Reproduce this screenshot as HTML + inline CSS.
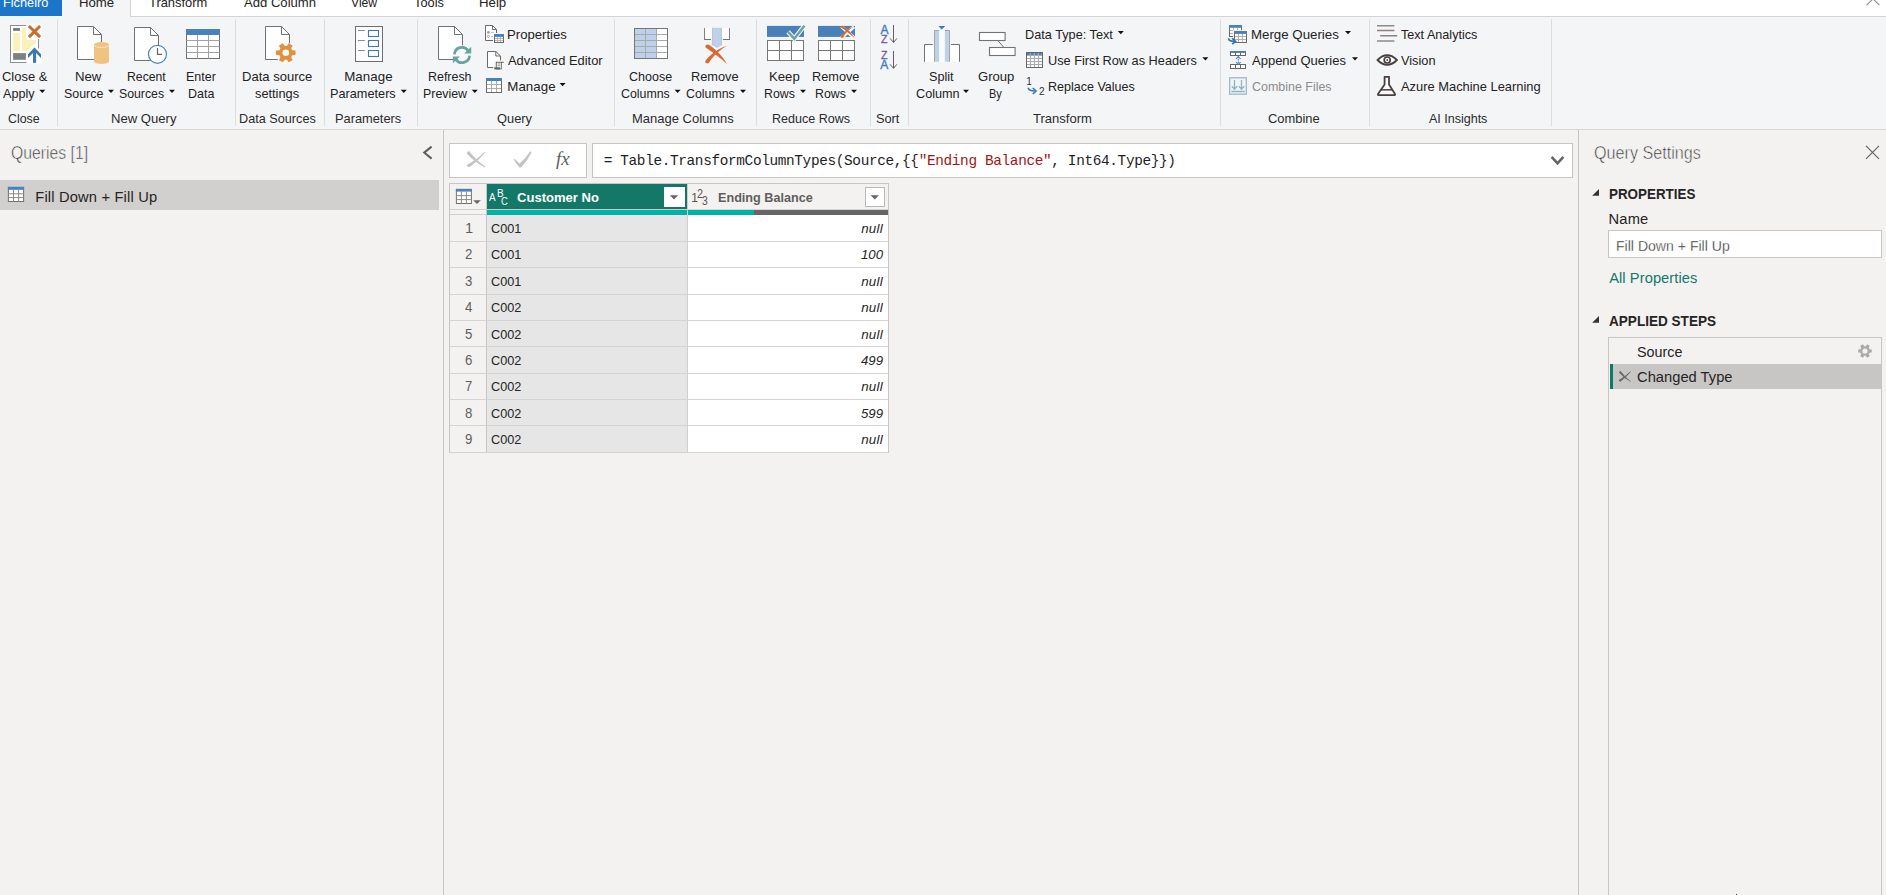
<!DOCTYPE html>
<html lang="en"><head><meta charset="utf-8"><title>Power Query Editor</title>
<style>
html,body{margin:0;padding:0}
body{width:1886px;height:895px;overflow:hidden;position:relative;background:#f3f2f1;font-family:"Liberation Sans", sans-serif;}
.t{position:absolute;white-space:pre;line-height:1;transform-origin:0 0}
.b{position:absolute;box-sizing:border-box}
svg{position:absolute;left:0;top:0}
</style></head><body>
<div class="b" style="left:0px;top:0px;width:1886px;height:16px;background:#ffffff;"></div>
<div class="b" style="left:0px;top:0px;width:62px;height:15.6px;background:#1b75c9;"></div>
<div class="b" style="left:62px;top:0px;width:69px;height:17px;background:#f4f5f7;border-right:1px solid #d4d5d7;"></div>
<div class="b" style="left:0px;top:16px;width:1886px;height:114px;background:#f4f5f7;border-bottom:1px solid #d6d7d9;"></div>
<div class="b" style="left:130px;top:16px;width:1756px;height:1px;background:#d4d5d7;"></div>
<div class="b" style="left:57px;top:19px;width:1px;height:107px;background:#dddee0;"></div>
<div class="b" style="left:235px;top:19px;width:1px;height:107px;background:#dddee0;"></div>
<div class="b" style="left:324px;top:19px;width:1px;height:107px;background:#dddee0;"></div>
<div class="b" style="left:417px;top:19px;width:1px;height:107px;background:#dddee0;"></div>
<div class="b" style="left:614px;top:19px;width:1px;height:107px;background:#dddee0;"></div>
<div class="b" style="left:756px;top:19px;width:1px;height:107px;background:#dddee0;"></div>
<div class="b" style="left:870px;top:19px;width:1px;height:107px;background:#dddee0;"></div>
<div class="b" style="left:908px;top:19px;width:1px;height:107px;background:#dddee0;"></div>
<div class="b" style="left:1220px;top:19px;width:1px;height:107px;background:#dddee0;"></div>
<div class="b" style="left:1369px;top:19px;width:1px;height:107px;background:#dddee0;"></div>
<div class="b" style="left:1551px;top:19px;width:1px;height:107px;background:#dddee0;"></div>
<div class="b" style="left:0px;top:180px;width:438.75px;height:29.75px;background:#d2d0ce;"></div>
<div class="b" style="left:443px;top:130px;width:1px;height:765px;background:#c8c6c4;"></div>
<div class="b" style="left:1578px;top:130px;width:1px;height:765px;background:#c8c6c4;"></div>
<div class="b" style="left:449px;top:143px;width:138px;height:35px;background:#ffffff;border:1px solid #c8c6c4;"></div>
<div class="b" style="left:592px;top:143px;width:981px;height:35px;background:#ffffff;border:1px solid #c8c6c4;"></div>
<div class="b" style="left:449px;top:183px;width:440px;height:270px;background:#ffffff;border:1px solid #c8c6c4;"></div>
<div class="b" style="left:450px;top:184px;width:36px;height:31px;background:#f3f2f1;"></div>
<div class="b" style="left:486px;top:184px;width:1px;height:268px;background:#c8c6c4;"></div>
<div class="b" style="left:487px;top:184px;width:200px;height:25px;background:#147868;"></div>
<div class="b" style="left:487px;top:209px;width:200px;height:1px;background:#cfc9c8;"></div>
<div class="b" style="left:487px;top:210px;width:200px;height:5px;background:#00b2a6;"></div>
<div class="b" style="left:687px;top:184px;width:1px;height:268px;background:#d2d0ce;"></div>
<div class="b" style="left:688px;top:184px;width:200px;height:25px;background:#f3f2f1;"></div>
<div class="b" style="left:688px;top:209px;width:200px;height:1px;background:#d8d6d4;"></div>
<div class="b" style="left:688px;top:210px;width:66px;height:5px;background:#00b2a6;"></div>
<div class="b" style="left:754px;top:210px;width:134px;height:5px;background:#666666;"></div>
<div class="b" style="left:450px;top:209px;width:36px;height:1px;background:#d2d0ce;"></div>
<div class="b" style="left:450px;top:214px;width:36px;height:1px;background:#d2d0ce;"></div>
<div class="b" style="left:664px;top:187px;width:20.5px;height:19.6px;background:#ffffff;"></div>
<div class="b" style="left:865px;top:187px;width:20px;height:19.6px;background:#ffffff;border:1px solid #b9b9b9;"></div>
<div class="b" style="left:450px;top:215px;width:36px;height:26px;background:#f3f2f1;"></div>
<div class="b" style="left:487px;top:215px;width:200px;height:26px;background:#e6e6e6;"></div>
<div class="b" style="left:450px;top:241px;width:438px;height:1px;background:#d4d4d4;"></div>
<div class="b" style="left:450px;top:242px;width:36px;height:25px;background:#f3f2f1;"></div>
<div class="b" style="left:487px;top:242px;width:200px;height:25px;background:#e6e6e6;"></div>
<div class="b" style="left:450px;top:267px;width:438px;height:1px;background:#d4d4d4;"></div>
<div class="b" style="left:450px;top:268px;width:36px;height:26px;background:#f3f2f1;"></div>
<div class="b" style="left:487px;top:268px;width:200px;height:26px;background:#e6e6e6;"></div>
<div class="b" style="left:450px;top:294px;width:438px;height:1px;background:#d4d4d4;"></div>
<div class="b" style="left:450px;top:295px;width:36px;height:25px;background:#f3f2f1;"></div>
<div class="b" style="left:487px;top:295px;width:200px;height:25px;background:#e6e6e6;"></div>
<div class="b" style="left:450px;top:320px;width:438px;height:1px;background:#d4d4d4;"></div>
<div class="b" style="left:450px;top:321px;width:36px;height:25px;background:#f3f2f1;"></div>
<div class="b" style="left:487px;top:321px;width:200px;height:25px;background:#e6e6e6;"></div>
<div class="b" style="left:450px;top:346px;width:438px;height:1px;background:#d4d4d4;"></div>
<div class="b" style="left:450px;top:347px;width:36px;height:26px;background:#f3f2f1;"></div>
<div class="b" style="left:487px;top:347px;width:200px;height:26px;background:#e6e6e6;"></div>
<div class="b" style="left:450px;top:373px;width:438px;height:1px;background:#d4d4d4;"></div>
<div class="b" style="left:450px;top:374px;width:36px;height:25px;background:#f3f2f1;"></div>
<div class="b" style="left:487px;top:374px;width:200px;height:25px;background:#e6e6e6;"></div>
<div class="b" style="left:450px;top:399px;width:438px;height:1px;background:#d4d4d4;"></div>
<div class="b" style="left:450px;top:400px;width:36px;height:25px;background:#f3f2f1;"></div>
<div class="b" style="left:487px;top:400px;width:200px;height:25px;background:#e6e6e6;"></div>
<div class="b" style="left:450px;top:425px;width:438px;height:1px;background:#d4d4d4;"></div>
<div class="b" style="left:450px;top:426px;width:36px;height:26px;background:#f3f2f1;"></div>
<div class="b" style="left:487px;top:426px;width:200px;height:26px;background:#e6e6e6;"></div>
<div class="b" style="left:450px;top:452px;width:438px;height:1px;background:#d4d4d4;"></div>
<div class="b" style="left:1608px;top:230px;width:274px;height:28px;background:#ffffff;border:1px solid #c8c6c4;"></div>
<div class="b" style="left:1608px;top:337px;width:274px;height:600px;border:1px solid #c8c6c4;"></div>
<div class="b" style="left:1610px;top:364px;width:271px;height:24.75px;background:#c8c6c4;"></div>
<div class="b" style="left:1610px;top:364px;width:3px;height:24.75px;background:#0e7a68;"></div>
<svg width="1886" height="895" viewBox="0 0 1886 895" font-family="Liberation Sans, sans-serif">
<path d="M1866.6 5.2L1873 -1.2L1879.4 5.2" fill="none" stroke="#8a8a8a" stroke-width="1.1"/>
<rect x="10.5" y="25.5" width="28" height="37" fill="#ffffff" stroke="#8a8f8d"/>
<rect x="13.1" y="28" width="6.8" height="2.9" fill="#7b7b7b"/>
<rect x="13.1" y="33" width="6.8" height="17.9" fill="#faf2b8"/>
<path d="M22 28H26V38.6L27.6 40.1H36.2V42.6L26.6 50.9H22Z" fill="#faf2b8"/>
<rect x="13.1" y="53.1" width="12.8" height="6.7" fill="#808080"/>
<path d="M26.2 23.8H42V38.9H27.6L26.2 37.6Z" fill="#ffffff"/>
<path d="M26.4 63.6V51.6L34.5 45L42 51.4V63.6Z" fill="#ffffff"/>
<path d="M28.9 26L40.1 37.1M40.1 26L28.9 37.1" stroke="#cd6b2a" stroke-width="3" fill="none"/>
<path d="M34.55 62.9V50" stroke="#3a78b4" stroke-width="3.1" fill="none"/>
<path d="M28 54.3L34.55 47.4L41 54.3V58L34.55 51.6L28 58Z" fill="#3a78b4"/>
<path d="M77.5 26.5H93.5L101.5 34.5V59.5H77.5Z" fill="#fff" stroke="#717171" stroke-width="1"/><path d="M93.5 26.5V34.5H101.5" fill="none" stroke="#717171" stroke-width="1"/>
<path d="M94 44.6v16.6a7.5 2.8 0 0 0 15 0V44.6a7.5 2.6 0 0 0 -15 0z" fill="#f0c480"/>
<path d="M94 44.9a7.5 2.6 0 0 0 15 0" fill="none" stroke="#fbe9cc" stroke-width="0.9"/>
<path d="M134.5 27.5H150.5L158.5 35.5V60.5H134.5Z" fill="#fff" stroke="#717171" stroke-width="1"/><path d="M150.5 27.5V35.5H158.5" fill="none" stroke="#717171" stroke-width="1"/>
<circle cx="157.45" cy="54.3" r="9" fill="#fff" stroke="#4a84c0" stroke-width="1.2"/>
<path d="M157.5 47.9V54.4H162.1" fill="none" stroke="#666" stroke-width="1.2"/>
<rect x="186.5" y="29.5" width="33.0" height="29.0" fill="#fff" stroke="#707070" stroke-width="1"/><rect x="186.0" y="29.0" width="34.0" height="6.0" fill="#4a80bc"/><path d="M197.5 35V58.5M208.5 35V58.5M186.5 40.5H219.5M186.5 46.5H219.5M186.5 52.5H219.5" fill="none" stroke="#a2a2a2" stroke-width="1"/>
<path d="M265.5 26.5H281.5L289.5 34.5V59.5H265.5Z" fill="#fff" stroke="#717171" stroke-width="1"/><path d="M281.5 26.5V34.5H289.5" fill="none" stroke="#717171" stroke-width="1"/>
<circle cx="285.8" cy="52.8" r="10.4" fill="#f8f8fa"/>
<path d="M292.22 50.26L295.55 50.57L295.55 55.03L292.22 55.34L291.21 57.09L292.61 60.13L288.74 62.36L286.81 59.63L284.79 59.63L282.86 62.36L278.99 60.13L280.39 57.09L279.38 55.34L276.05 55.03L276.05 50.57L279.38 50.26L280.39 48.51L278.99 45.47L282.86 43.24L284.79 45.97L286.81 45.97L288.74 43.24L292.61 45.47L291.21 48.51ZM289.1 52.8a3.3 3.3 0 1 0 -6.6 0a3.3 3.3 0 1 0 6.6 0Z" fill="#de9240" fill-rule="evenodd"/>
<rect x="355.5" y="26.5" width="27" height="35" fill="#fdfdfd" stroke="#6e6e6e"/>
<path d="M358 30.5H364.8M358 40.5H364.8M358 50.5H364.8" stroke="#8a8a8a" stroke-width="1"/>
<rect x="368.5" y="30.5" width="10" height="6" fill="#fff" stroke="#3f78b8" stroke-width="1.1"/>
<rect x="368.5" y="40.5" width="10" height="6" fill="#fff" stroke="#3f78b8" stroke-width="1.1"/>
<rect x="368.5" y="50.5" width="10" height="6" fill="#fff" stroke="#3f78b8" stroke-width="1.1"/>
<path d="M438.5 26.5H454.5L462.5 34.5V59.5H438.5Z" fill="#fff" stroke="#717171" stroke-width="1"/><path d="M454.5 26.5V34.5H462.5" fill="none" stroke="#717171" stroke-width="1"/>
<circle cx="462" cy="55" r="9.8" fill="#f8f8fa"/>
<path d="M454.4 54.4A7.6 7.6 0 0 1 468.2 50.6" fill="none" stroke="#69a3a1" stroke-width="2.7"/>
<path d="M471.2 46.8V53.6H464.2Z" fill="#69a3a1"/>
<path d="M469.6 55.6A7.6 7.6 0 0 1 455.8 59.4" fill="none" stroke="#69a3a1" stroke-width="2.7"/>
<path d="M452.9 63.3V56.4H459.9Z" fill="#69a3a1"/>
<path d="M485.5 25.5H492.5L496.5 29.5V40.5H485.5Z" fill="#fff" stroke="#696969" stroke-width="1"/>
<path d="M492.5 25.5V29.5H496.5" fill="none" stroke="#696969" stroke-width="1"/>
<circle cx="488.4" cy="32.4" r="1.35" fill="#9a9e9a"/><circle cx="488.4" cy="36.4" r="1.1" fill="none" stroke="#9a9e9a" stroke-width="0.8"/>
<path d="M491 32.4H493.8M491 36.4H492.8" stroke="#bcbcbc" stroke-width="1"/>
<rect x="493" y="33" width="12" height="11" fill="#f8f9fb"/>
<rect x="494.5" y="34.5" width="9.0" height="8.0" fill="#acacac" stroke="#6a6a6a" stroke-width="1"/><rect x="494.0" y="34.0" width="10.0" height="2.799999999999997" fill="#4a80bc"/><rect x="495.00" y="36.96" width="2.13" height="1.15" fill="#fff"/><rect x="497.93" y="36.96" width="2.13" height="1.15" fill="#fff"/><rect x="500.87" y="36.96" width="2.13" height="1.15" fill="#fff"/><rect x="495.00" y="38.91" width="2.13" height="1.15" fill="#fff"/><rect x="497.93" y="38.91" width="2.13" height="1.15" fill="#fff"/><rect x="500.87" y="38.91" width="2.13" height="1.15" fill="#fff"/><rect x="495.00" y="40.85" width="2.13" height="1.15" fill="#fff"/><rect x="497.93" y="40.85" width="2.13" height="1.15" fill="#fff"/><rect x="500.87" y="40.85" width="2.13" height="1.15" fill="#fff"/>
<path d="M487.5 51.5H495.8L500.5 56V67.5H487.5Z" fill="#fff" stroke="#696969" stroke-width="1"/>
<path d="M495.8 51.5V56H500.5" fill="none" stroke="#696969" stroke-width="1"/>
<rect x="493.2" y="60.4" width="11.2" height="9.8" fill="#f8f9fb"/>
<rect x="496.3" y="62.3" width="5" height="6.6" fill="#fff" stroke="#696969" stroke-width="1"/>
<path d="M501 62.3H503.9" stroke="#696969" stroke-width="1"/>
<path d="M497.5 64H500.1M497.5 65.8H500.1" stroke="#8a8a8a" stroke-width="0.9"/>
<rect x="494.2" y="67.3" width="5.8" height="2.1" fill="#666"/>
<rect x="486.5" y="78.5" width="15.0" height="14.0" fill="#fff" stroke="#6a6a6a" stroke-width="1"/><rect x="486.0" y="78.0" width="16.0" height="2.9000000000000057" fill="#4a80bc"/><path d="M491.5 80.9V92.5M496.5 80.9V92.5M486.5 84.5H501.5M486.5 88.5H501.5" fill="none" stroke="#adadad" stroke-width="1"/>
<rect x="486.5" y="78.5" width="15" height="14" fill="none" stroke="#6a6a6a"/>
<rect x="486" y="78" width="16" height="2.9" fill="#4a80bc"/>
<rect x="634.5" y="28.5" width="33" height="30" fill="#fff"/>
<rect x="634.5" y="28.5" width="22" height="30" fill="#bdd2ea"/>
<path d="M645.5 28.5V58.5M656.5 28.5V58.5M634.5 34.5H667.5M634.5 40.5H667.5M634.5 46.5H667.5M634.5 52.5H667.5" fill="none" stroke="#a9a9a9" stroke-width="1"/>
<rect x="634.5" y="28.5" width="33" height="30" fill="none" stroke="#757575" stroke-width="1"/>
<rect x="704.5" y="28" width="25" height="11.5" fill="#fff"/>
<path d="M704.5 28V39.5M729.5 28V39.5" fill="none" stroke="#8f7a84" stroke-width="1"/>
<path d="M704 39.5H711M723 39.5H730" fill="none" stroke="#727272" stroke-width="1"/>
<path d="M712.2 27.8H721.6V45.3L717 47.9L712.2 45.3Z" fill="#bdd2ea"/>
<path d="M712.4 28V45.2M721.4 28V45.2" stroke="#b4b8bd" stroke-width="0.7"/>
<path d="M705.6 47.4Q704.8 44.2 708 44.4C713 46.4 722 55 727 64C720 57.6 712 51.4 705.6 47.4Z" fill="#d66c34"/>
<path d="M727 45.8C720.6 49.4 712 57 708.8 63Q706 64.4 705 61.8C708 56 718 48.6 727 45.8Z" fill="#d66c34"/>
<rect x="767" y="25.9" width="37" height="11" fill="#4a80ba"/>
<rect x="767.5" y="40.5" width="36.0" height="20.0" fill="#fff" stroke="#767676" stroke-width="1"/><path d="M779.5 40.5V60.5M791.5 40.5V60.5M767.5 50.5H803.5" fill="none" stroke="#767676" stroke-width="1"/>
<path d="M788.1 31.9L794.3 38.7L804.4 25.7" fill="none" stroke="#f6f7f9" stroke-width="4.6"/>
<path d="M788.1 31.9L794.3 38.7L804.4 25.7" fill="none" stroke="#6ea5a0" stroke-width="2.6"/>
<rect x="818" y="25.9" width="37" height="11" fill="#4a80ba"/>
<rect x="818.5" y="40.5" width="36.0" height="20.0" fill="#fff" stroke="#767676" stroke-width="1"/><path d="M830.5 40.5V60.5M842.5 40.5V60.5M818.5 50.5H854.5" fill="none" stroke="#767676" stroke-width="1"/>
<path d="M841.4 26.4L854.6 38.2M854 26.8L841.4 37.8" fill="none" stroke="#f6f7f9" stroke-width="3.4"/>
<path d="M840.8 27.6Q840.6 25.4 842.8 25.8C846.5 28 852 33.4 854.9 38.6C850.6 34.4 845.4 30.2 840.8 27.6Z" fill="#d66c34"/>
<path d="M854.3 26.6C850 28.8 845.2 33.4 843.2 37.6Q841.4 38.8 840.6 36.8C842.6 33.2 848.8 28.2 854.3 26.6Z" fill="#d66c34"/>
<text x="880.6" y="33.6" font-size="12" fill="#3c7cc0" stroke="#3c7cc0" stroke-width="0.35">A</text>
<text x="880.9" y="42.8" font-size="10.6" fill="#6e5a96" stroke="#6e5a96" stroke-width="0.3">Z</text>
<path d="M893.5 25V42.3M890.1 38.4L893.5 42.5L896.9 38.4" fill="none" stroke="#6b5b66" stroke-width="1"/>
<text x="880.9" y="58.7" font-size="10.6" fill="#6e5a96" stroke="#6e5a96" stroke-width="0.3">Z</text>
<text x="880.3" y="68.7" font-size="12" fill="#3c7cc0" stroke="#3c7cc0" stroke-width="0.35">A</text>
<path d="M893.5 51V68.2M890.1 64.3L893.5 68.4L896.9 64.3" fill="none" stroke="#6b5b66" stroke-width="1"/>
<rect x="924.5" y="44.5" width="35" height="17.3" fill="#fff"/>
<path d="M924.5 61.8V44.5H932.8M951 44.5H959.5V61.8" fill="none" stroke="#727272" stroke-width="1"/>
<rect x="934" y="30" width="16" height="31.8" fill="#f9fafb"/>
<rect x="934" y="30" width="5.1" height="31.8" fill="#bdd2ea"/><rect x="944.9" y="30" width="5.1" height="31.8" fill="#bdd2ea"/>
<path d="M934.5 61.8V30.5H939.1M944.9 30.5H949.5V61.8" fill="none" stroke="#a6a6a6" stroke-width="1"/>
<path d="M938.3 26H945.3L941.8 29.6Z" fill="#3f7abf"/>
<rect x="979.5" y="32.5" width="25.6" height="8" fill="#fff" stroke="#727272" stroke-width="1.1"/>
<rect x="989.5" y="47.5" width="25.6" height="8" fill="#fff" stroke="#727272" stroke-width="1.1"/>
<path d="M997.8 40.5L1004 47.5" stroke="#727272" stroke-width="1"/>
<rect x="1026.5" y="52.5" width="16.0" height="15.0" fill="#ababab" stroke="#666" stroke-width="1"/><rect x="1027.00" y="53.00" width="2.92" height="1.92" fill="#fff"/><rect x="1031.03" y="53.00" width="2.92" height="1.92" fill="#fff"/><rect x="1035.05" y="53.00" width="2.92" height="1.92" fill="#fff"/><rect x="1039.08" y="53.00" width="2.92" height="1.92" fill="#fff"/><rect x="1027.00" y="56.02" width="2.92" height="1.92" fill="#fff"/><rect x="1031.03" y="56.02" width="2.92" height="1.92" fill="#fff"/><rect x="1035.05" y="56.02" width="2.92" height="1.92" fill="#fff"/><rect x="1039.08" y="56.02" width="2.92" height="1.92" fill="#fff"/><rect x="1027.00" y="59.04" width="2.92" height="1.92" fill="#fff"/><rect x="1031.03" y="59.04" width="2.92" height="1.92" fill="#fff"/><rect x="1035.05" y="59.04" width="2.92" height="1.92" fill="#fff"/><rect x="1039.08" y="59.04" width="2.92" height="1.92" fill="#fff"/><rect x="1027.00" y="62.06" width="2.92" height="1.92" fill="#fff"/><rect x="1031.03" y="62.06" width="2.92" height="1.92" fill="#fff"/><rect x="1035.05" y="62.06" width="2.92" height="1.92" fill="#fff"/><rect x="1039.08" y="62.06" width="2.92" height="1.92" fill="#fff"/><rect x="1027.00" y="65.08" width="2.92" height="1.92" fill="#fff"/><rect x="1031.03" y="65.08" width="2.92" height="1.92" fill="#fff"/><rect x="1035.05" y="65.08" width="2.92" height="1.92" fill="#fff"/><rect x="1039.08" y="65.08" width="2.92" height="1.92" fill="#fff"/>
<rect x="1027.00" y="53" width="2.9" height="1.95" fill="#3f80c8"/>
<rect x="1030.97" y="53" width="2.9" height="1.95" fill="#3f80c8"/>
<rect x="1034.95" y="53" width="2.9" height="1.95" fill="#3f80c8"/>
<rect x="1038.92" y="53" width="2.9" height="1.95" fill="#3f80c8"/>
<path d="M1028.2 87.8C1028.4 90.4 1030.4 91 1034.8 91" fill="none" stroke="#3a7ab8" stroke-width="1.7"/>
<path d="M1032.8 88L1036 91L1032.8 94" fill="none" stroke="#3a7ab8" stroke-width="1.7"/>
<rect x="1229.5" y="25.5" width="12.0" height="11.0" fill="#acacac" stroke="#6a6a6a" stroke-width="1"/><rect x="1229.0" y="25.0" width="13.0" height="2.6999999999999993" fill="#4a80bc"/><rect x="1230.00" y="27.88" width="3.07" height="2.11" fill="#fff"/><rect x="1233.97" y="27.88" width="3.07" height="2.11" fill="#fff"/><rect x="1237.93" y="27.88" width="3.07" height="2.11" fill="#fff"/><rect x="1230.00" y="30.89" width="3.07" height="2.11" fill="#fff"/><rect x="1233.97" y="30.89" width="3.07" height="2.11" fill="#fff"/><rect x="1237.93" y="30.89" width="3.07" height="2.11" fill="#fff"/><rect x="1230.00" y="33.89" width="3.07" height="2.11" fill="#fff"/><rect x="1233.97" y="33.89" width="3.07" height="2.11" fill="#fff"/><rect x="1237.93" y="33.89" width="3.07" height="2.11" fill="#fff"/>
<rect x="1233" y="30.2" width="15" height="13.8" fill="#f8f9fb"/>
<rect x="1234.5" y="31.5" width="12.0" height="11.0" fill="#acacac" stroke="#6a6a6a" stroke-width="1"/><rect x="1234.0" y="31.0" width="13.0" height="2.799999999999997" fill="#4a80bc"/><rect x="1235.00" y="33.98" width="3.07" height="2.07" fill="#fff"/><rect x="1238.97" y="33.98" width="3.07" height="2.07" fill="#fff"/><rect x="1242.93" y="33.98" width="3.07" height="2.07" fill="#fff"/><rect x="1235.00" y="36.95" width="3.07" height="2.07" fill="#fff"/><rect x="1238.97" y="36.95" width="3.07" height="2.07" fill="#fff"/><rect x="1242.93" y="36.95" width="3.07" height="2.07" fill="#fff"/><rect x="1235.00" y="39.93" width="3.07" height="2.07" fill="#fff"/><rect x="1238.97" y="39.93" width="3.07" height="2.07" fill="#fff"/><rect x="1242.93" y="39.93" width="3.07" height="2.07" fill="#fff"/>
<path d="M1228.5 38.4C1228.7 40.8 1230.4 41.4 1234.4 41.4" fill="none" stroke="#2f74b8" stroke-width="1.7"/>
<path d="M1232.2 38.4L1235.6 41.4L1232.2 44.2" fill="none" stroke="#2f74b8" stroke-width="1.7"/>
<rect x="1230.5" y="51.5" width="15.0" height="4.0" fill="#666" stroke="#666" stroke-width="1"/><rect x="1230.0" y="51.0" width="16.0" height="1.7000000000000028" fill="#4a80bc"/><rect x="1231.00" y="52.90" width="4.00" height="2.10" fill="#fff"/><rect x="1236.00" y="52.90" width="4.00" height="2.10" fill="#fff"/><rect x="1241.00" y="52.90" width="4.00" height="2.10" fill="#fff"/>
<rect x="1230.5" y="64.5" width="15.0" height="4.0" fill="#666" stroke="#666" stroke-width="1"/><rect x="1231.00" y="65.00" width="4.00" height="3.00" fill="#fff"/><rect x="1236.00" y="65.00" width="4.00" height="3.00" fill="#fff"/><rect x="1241.00" y="65.00" width="4.00" height="3.00" fill="#fff"/>
<path d="M1238.3 56.6V64.4" fill="none" stroke="#3f86b8" stroke-width="1.1" stroke-dasharray="1.6 0.8"/>
<path d="M1236 59L1238.3 56.5L1240.6 59M1236 62L1238.3 64.5L1240.6 62" fill="none" stroke="#3f86b8" stroke-width="1.1"/>
<rect x="1229.7" y="77.8" width="16.6" height="16.4" fill="#f1f5f8" stroke="#94b4c4" stroke-width="1.2"/>
<path d="M1234.5 80V89M1231.8 86.2L1234.5 89.3L1237.2 86.2M1241.5 80V89M1238.8 86.2L1241.5 89.3L1244.2 86.2M1231.4 91.5H1244.8" fill="none" stroke="#90b5c1" stroke-width="1.3"/>
<path d="M1377 25.7H1394.4M1377 40.9H1394.4" stroke="#8a8a8a" stroke-width="1.5"/>
<path d="M1377 30.6H1394.4M1380.2 35.8H1397.2" stroke="#8f7f80" stroke-width="1.5"/>
<path d="M1377.6 60C1381 56.2 1384 55.2 1387.2 55.2C1390.4 55.2 1393.4 56.2 1396.8 60C1393.4 63.8 1390.4 64.8 1387.2 64.8C1384 64.8 1381 63.8 1377.6 60Z" fill="#fdfdfd" stroke="#48413f" stroke-width="1.9"/>
<circle cx="1387.2" cy="60" r="3" fill="#fff" stroke="#48413f" stroke-width="1.7"/><circle cx="1387.2" cy="60" r="0.9" fill="#48413f"/>
<path d="M1383.8 76.9H1389.8M1384.6 76.9V84.6L1378 94Q1377.6 95.2 1379 95.2H1394Q1395.4 95.2 1395 94L1389 84.6V76.9" fill="#fbfbfc" stroke="#48413f" stroke-width="1.8" stroke-linejoin="round"/>
<path d="M1380.6 89.8H1392.8" stroke="#48413f" stroke-width="1.5"/>
<path d="M39.3 89.8h6l-3.0 3.2z" fill="#111"/>
<path d="M108 89.8h6l-3.0 3.2z" fill="#111"/>
<path d="M169 89.8h6l-3.0 3.2z" fill="#111"/>
<path d="M400.8 89.8h6l-3.0 3.2z" fill="#111"/>
<path d="M471.8 89.8h6l-3.0 3.2z" fill="#111"/>
<path d="M674.6 89.8h6l-3.0 3.2z" fill="#111"/>
<path d="M740 89.8h6l-3.0 3.2z" fill="#111"/>
<path d="M800 89.8h6l-3.0 3.2z" fill="#111"/>
<path d="M851 89.8h6l-3.0 3.2z" fill="#111"/>
<path d="M963 89.8h6l-3.0 3.2z" fill="#111"/>
<path d="M559.6 83h6l-3.0 3.2z" fill="#111"/>
<path d="M1117.8 31h6l-3.0 3.2z" fill="#111"/>
<path d="M1202.4 57.2h6l-3.0 3.2z" fill="#111"/>
<path d="M1345 31h6l-3.0 3.2z" fill="#111"/>
<path d="M1352 57.2h6l-3.0 3.2z" fill="#111"/>
<path d="M431.6 146.6L424.2 152.6L431.6 158.6" fill="none" stroke="#605e5c" stroke-width="2"/>
<rect x="8.4" y="187.4" width="15.200000000000001" height="14.099999999999994" fill="#fff" stroke="#707070" stroke-width="1"/><rect x="7.9" y="186.9" width="16.200000000000003" height="2.9000000000000057" fill="#4a80bc"/><path d="M13.5 189.8V201.5M18.6 189.8V201.5M8.4 193.8H23.6M8.4 197.6H23.6" fill="none" stroke="#8a8a8a" stroke-width="1"/>
<path d="M466.89 153.69Q474.72 161.98 484.91 167.54L485.49 166.86Q476.13 160.35 469.11 151.11Q466.84 151.40 466.89 153.69Z" fill="#c4c4c4"/>
<path d="M469.08 167.31Q478.33 161.22 485.29 152.35L484.71 151.65Q476.96 159.56 466.92 164.69Q466.82 166.97 469.08 167.31Z" fill="#c4c4c4"/>
<path d="M521.90 166.57Q527.75 160.20 531.71 152.35L530.29 151.25Q525.54 158.48 518.90 164.23Q519.35 166.75 521.90 166.57Z" fill="#c4c4c4"/>
<path d="M522.25 165.45Q517.86 162.66 514.64 158.79L513.76 159.61Q516.16 164.22 519.75 167.75Q522.04 167.73 522.25 165.45Z" fill="#c4c4c4"/>
<path d="M1551.6 156.8L1557.5 163.3L1563.4 156.8" fill="none" stroke="#666" stroke-width="2.6"/>
<rect x="456.4" y="189.4" width="15.0" height="14.099999999999994" fill="#fff" stroke="#707070" stroke-width="1"/><rect x="455.9" y="188.9" width="16.0" height="2.6999999999999886" fill="#4a80bc"/><path d="M461.4 191.6V203.5M466.4 191.6V203.5M456.4 195.6H471.4M456.4 199.6H471.4" fill="none" stroke="#8a8a8a" stroke-width="1"/>
<path d="M473.2 200.2h7.6l-3.8 3.8z" fill="#666"/>
<path d="M669.8 195.2h8.4l-4.2 4.4z" fill="#666"/>
<path d="M870.6 195.2h8.4l-4.2 4.4z" fill="#666"/>
<path d="M1866 145.8L1879 158.8M1879 145.8L1866 158.8" stroke="#605e5c" stroke-width="1.1"/>
<path d="M1599 189V195.8H1592.2Z" fill="#333"/>
<path d="M1599 316V322.8H1592.2Z" fill="#333"/>
<path d="M1619.04 372.66Q1624.02 378.14 1630.60 381.82L1631.00 381.38Q1624.98 377.05 1620.56 370.94Q1619.03 371.11 1619.04 372.66Z" fill="#6a6a6a"/>
<path d="M1620.34 381.68Q1626.33 377.68 1630.79 371.83L1630.41 371.37Q1625.40 376.56 1618.86 379.92Q1618.81 381.46 1620.34 381.68Z" fill="#6a6a6a"/>
<path d="M1869.56 349.20L1871.82 349.44L1871.82 352.56L1869.56 352.80L1868.84 354.04L1869.77 356.13L1867.06 357.69L1865.72 355.85L1864.28 355.85L1862.94 357.69L1860.23 356.13L1861.16 354.04L1860.44 352.80L1858.18 352.56L1858.18 349.44L1860.44 349.20L1861.16 347.96L1860.23 345.87L1862.94 344.31L1864.28 346.15L1865.72 346.15L1867.06 344.31L1869.77 345.87L1868.84 347.96ZM1867.6 351a2.6 2.6 0 1 0 -5.2 0a2.6 2.6 0 1 0 5.2 0Z" fill="#ababab" fill-rule="evenodd"/>
<circle cx="1736.6" cy="895.2" r="2" fill="#fff"/><path d="M1735.9 895L1736.6 893.7L1737.3 895Z" fill="#111"/>
</svg>
<span class="t" style='left:3.44px;top:-4.46px;font-size:13.3px;transform:scaleX(0.9587);color:#ffffff;'>Ficheiro</span>
<span class="t" style='left:78.61px;top:-4.46px;font-size:13.3px;transform:scaleX(0.9920);color:#222222;'>Home</span>
<span class="t" style='left:149.30px;top:-4.46px;font-size:13.3px;transform:scaleX(0.9698);color:#222222;'>Transform</span>
<span class="t" style='left:244.00px;top:-4.46px;font-size:13.3px;transform:scaleX(0.9838);color:#222222;'>Add Column</span>
<span class="t" style='left:351.20px;top:-4.46px;font-size:13.3px;transform:scaleX(0.9145);color:#222222;'>View</span>
<span class="t" style='left:413.60px;top:-4.46px;font-size:13.3px;transform:scaleX(0.9652);color:#222222;'>Tools</span>
<span class="t" style='left:479.41px;top:-4.46px;font-size:13.3px;transform:scaleX(0.9941);color:#222222;'>Help</span>
<span class="t" style='left:1.50px;top:69.94px;font-size:13.3px;transform:scaleX(0.9745);color:#222222;'>Close &amp;</span>
<span class="t" style='left:2.50px;top:86.54px;font-size:13.3px;transform:scaleX(0.9461);color:#222222;'>Apply</span>
<span class="t" style='left:75.21px;top:69.94px;font-size:13.3px;transform:scaleX(0.9924);color:#222222;'>New</span>
<span class="t" style='left:64.20px;top:86.54px;font-size:13.3px;transform:scaleX(0.9345);color:#222222;'>Source</span>
<span class="t" style='left:126.58px;top:69.94px;font-size:13.3px;transform:scaleX(0.9195);color:#222222;'>Recent</span>
<span class="t" style='left:119.00px;top:86.54px;font-size:13.3px;transform:scaleX(0.9241);color:#222222;'>Sources</span>
<span class="t" style='left:186.26px;top:69.94px;font-size:13.3px;transform:scaleX(0.9377);color:#222222;'>Enter</span>
<span class="t" style='left:188.26px;top:86.54px;font-size:13.3px;transform:scaleX(0.9389);color:#222222;'>Data</span>
<span class="t" style='left:242.32px;top:69.94px;font-size:13.3px;transform:scaleX(0.9801);color:#222222;'>Data source</span>
<span class="t" style='left:255.40px;top:86.54px;font-size:13.3px;transform:scaleX(0.9615);color:#222222;'>settings</span>
<span class="t" style='left:344.20px;top:69.94px;font-size:13.3px;letter-spacing:0.069px;color:#222222;'>Manage</span>
<span class="t" style='left:330.34px;top:86.54px;font-size:13.3px;transform:scaleX(0.9563);color:#222222;'>Parameters</span>
<span class="t" style='left:428.27px;top:69.94px;font-size:13.3px;transform:scaleX(0.9344);color:#222222;'>Refresh</span>
<span class="t" style='left:423.07px;top:86.54px;font-size:13.3px;transform:scaleX(0.9317);color:#222222;'>Preview</span>
<span class="t" style='left:629.20px;top:69.94px;font-size:13.3px;transform:scaleX(0.9420);color:#222222;'>Choose</span>
<span class="t" style='left:621.40px;top:86.54px;font-size:13.3px;transform:scaleX(0.9296);color:#222222;'>Columns</span>
<span class="t" style='left:691.24px;top:69.94px;font-size:13.3px;transform:scaleX(0.9601);color:#222222;'>Remove</span>
<span class="t" style='left:686.20px;top:86.54px;font-size:13.3px;transform:scaleX(0.9296);color:#222222;'>Columns</span>
<span class="t" style='left:769.21px;top:69.94px;font-size:13.3px;transform:scaleX(0.9913);color:#222222;'>Keep</span>
<span class="t" style='left:764.37px;top:86.54px;font-size:13.3px;transform:scaleX(0.9264);color:#222222;'>Rows</span>
<span class="t" style='left:812.44px;top:69.94px;font-size:13.3px;transform:scaleX(0.9581);color:#222222;'>Remove</span>
<span class="t" style='left:815.27px;top:86.54px;font-size:13.3px;transform:scaleX(0.9294);color:#222222;'>Rows</span>
<span class="t" style='left:929.20px;top:69.94px;font-size:13.3px;transform:scaleX(0.9514);color:#222222;'>Split</span>
<span class="t" style='left:915.50px;top:86.54px;font-size:13.3px;transform:scaleX(0.9511);color:#222222;'>Column</span>
<span class="t" style='left:978.40px;top:69.94px;font-size:13.3px;transform:scaleX(0.9847);color:#222222;'>Group</span>
<span class="t" style='left:989.48px;top:86.54px;font-size:13.3px;transform:scaleX(0.8205);color:#222222;'>By</span>
<span class="t" style='left:506.86px;top:28.04px;font-size:13.3px;transform:scaleX(0.9874);color:#222222;'>Properties</span>
<span class="t" style='left:507.85px;top:54.14px;font-size:13.3px;transform:scaleX(0.9700);color:#222222;'>Advanced Editor</span>
<span class="t" style='left:507.35px;top:80.04px;font-size:13.3px;letter-spacing:0.029px;color:#222222;'>Manage</span>
<span class="t" style='left:1024.79px;top:28.04px;font-size:13.3px;transform:scaleX(0.9565);color:#222222;'>Data Type: Text</span>
<span class="t" style='left:1047.69px;top:54.14px;font-size:13.3px;transform:scaleX(0.9591);color:#222222;'>Use First Row as Headers</span>
<span class="t" style='left:1047.71px;top:80.04px;font-size:13.3px;transform:scaleX(0.9421);color:#222222;'>Replace Values</span>
<span class="t" style='left:1250.75px;top:28.04px;font-size:13.3px;transform:scaleX(0.9989);color:#222222;'>Merge Queries</span>
<span class="t" style='left:1251.75px;top:54.14px;font-size:13.3px;transform:scaleX(0.9777);color:#222222;'>Append Queries</span>
<span class="t" style='left:1252.05px;top:80.04px;font-size:13.3px;transform:scaleX(0.9363);color:#8c8c8c;'>Combine Files</span>
<span class="t" style='left:1400.65px;top:28.04px;font-size:13.3px;transform:scaleX(0.9481);color:#222222;'>Text Analytics</span>
<span class="t" style='left:1400.95px;top:54.14px;font-size:13.3px;transform:scaleX(0.9584);color:#222222;'>Vision</span>
<span class="t" style='left:1400.95px;top:80.04px;font-size:13.3px;transform:scaleX(0.9691);color:#222222;'>Azure Machine Learning</span>
<span class="t" style='left:8.20px;top:112.44px;font-size:13.3px;transform:scaleX(0.9286);color:#2b2b2b;'>Close</span>
<span class="t" style='left:111.22px;top:112.44px;font-size:13.3px;transform:scaleX(0.9840);color:#2b2b2b;'>New Query</span>
<span class="t" style='left:239.05px;top:112.44px;font-size:13.3px;transform:scaleX(0.9535);color:#2b2b2b;'>Data Sources</span>
<span class="t" style='left:334.64px;top:112.44px;font-size:13.3px;transform:scaleX(0.9636);color:#2b2b2b;'>Parameters</span>
<span class="t" style='left:497.00px;top:112.44px;font-size:13.3px;transform:scaleX(0.9655);color:#2b2b2b;'>Query</span>
<span class="t" style='left:632.32px;top:112.44px;font-size:13.3px;transform:scaleX(0.9772);color:#2b2b2b;'>Manage Columns</span>
<span class="t" style='left:771.86px;top:112.44px;font-size:13.3px;transform:scaleX(0.9437);color:#2b2b2b;'>Reduce Rows</span>
<span class="t" style='left:875.80px;top:112.44px;font-size:13.3px;transform:scaleX(0.9598);color:#2b2b2b;'>Sort</span>
<span class="t" style='left:1033.20px;top:112.44px;font-size:13.3px;transform:scaleX(0.9798);color:#2b2b2b;'>Transform</span>
<span class="t" style='left:1268.00px;top:112.44px;font-size:13.3px;transform:scaleX(0.9713);color:#2b2b2b;'>Combine</span>
<span class="t" style='left:1429.30px;top:112.44px;font-size:13.3px;transform:scaleX(0.9402);color:#2b2b2b;'>AI Insights</span>
<span class="t" style='left:11.30px;top:144.16px;font-size:18px;transform:scaleX(0.8755);color:#333333;-webkit-text-stroke:0.55px #f3f2f1;'>Queries [1]</span>
<span class="t" style='left:35.30px;top:189.66px;font-size:14.7px;letter-spacing:0.168px;color:#252423;'>Fill Down + Fill Up</span>
<span class="t" style='left:556.00px;top:149.36px;font-size:19px;letter-spacing:0.021px;color:#606060;font-family:"Liberation Serif", serif;font-style:italic;'>fx</span>
<span class="t" style='left:517.20px;top:190.94px;font-size:13.3px;transform:scaleX(0.9813);color:#ffffff;font-weight:700;'>Customer No</span>
<span class="t" style='left:718.20px;top:191.24px;font-size:13.3px;transform:scaleX(0.9492);color:#605e5c;font-weight:700;'>Ending Balance</span>
<span class="t" style='left:1594.00px;top:144.36px;font-size:18px;transform:scaleX(0.8971);color:#333333;-webkit-text-stroke:0.55px #f3f2f1;'>Query Settings</span>
<span class="t" style='left:1609.20px;top:186.76px;font-size:14.7px;transform:scaleX(0.9128);color:#252423;font-weight:700;'>PROPERTIES</span>
<span class="t" style='left:1608.60px;top:211.76px;font-size:14.7px;letter-spacing:0.130px;color:#252423;'>Name</span>
<span class="t" style='left:1616.02px;top:238.81px;font-size:14.4px;transform:scaleX(0.9779);color:#2a2a2a;-webkit-text-stroke:0.3px #ffffff;'>Fill Down + Fill Up</span>
<span class="t" style='left:1609.20px;top:270.76px;font-size:14.7px;letter-spacing:0.062px;color:#11786c;'>All Properties</span>
<span class="t" style='left:1609.20px;top:313.66px;font-size:14.7px;transform:scaleX(0.9234);color:#252423;font-weight:700;'>APPLIED STEPS</span>
<span class="t" style='left:1637.00px;top:344.66px;font-size:14.7px;transform:scaleX(0.9748);color:#252423;'>Source</span>
<span class="t" style='left:1637.00px;top:369.86px;font-size:14.7px;letter-spacing:0.021px;color:#252423;'>Changed Type</span>
<span class="t" style='left:464.90px;top:221.26px;font-size:14.7px;letter-spacing:0.000px;color:#605e5c;'>1</span>
<span class="t" style='left:491.00px;top:222.24px;font-size:13.3px;transform:scaleX(0.9524);color:#252423;'>C001</span>
<span class="t" style='left:861.20px;top:222.24px;font-size:13.3px;letter-spacing:0.285px;color:#252423;font-style:italic;'>null</span>
<span class="t" style='left:464.60px;top:247.06px;font-size:14.7px;transform:scaleX(0.9000);color:#605e5c;'>2</span>
<span class="t" style='left:491.00px;top:248.04px;font-size:13.3px;transform:scaleX(0.9524);color:#252423;'>C001</span>
<span class="t" style='left:861.20px;top:248.04px;font-size:13.3px;transform:scaleX(0.9917);color:#252423;font-style:italic;'>100</span>
<span class="t" style='left:464.60px;top:274.06px;font-size:14.7px;transform:scaleX(0.9000);color:#605e5c;'>3</span>
<span class="t" style='left:491.00px;top:275.04px;font-size:13.3px;transform:scaleX(0.9524);color:#252423;'>C001</span>
<span class="t" style='left:861.20px;top:275.04px;font-size:13.3px;letter-spacing:0.285px;color:#252423;font-style:italic;'>null</span>
<span class="t" style='left:464.60px;top:300.26px;font-size:14.7px;transform:scaleX(0.9000);color:#605e5c;'>4</span>
<span class="t" style='left:491.00px;top:301.24px;font-size:13.3px;transform:scaleX(0.9524);color:#252423;'>C002</span>
<span class="t" style='left:861.20px;top:301.24px;font-size:13.3px;letter-spacing:0.285px;color:#252423;font-style:italic;'>null</span>
<span class="t" style='left:464.60px;top:326.86px;font-size:14.7px;transform:scaleX(0.9000);color:#605e5c;'>5</span>
<span class="t" style='left:491.00px;top:327.84px;font-size:13.3px;transform:scaleX(0.9524);color:#252423;'>C002</span>
<span class="t" style='left:861.20px;top:327.84px;font-size:13.3px;letter-spacing:0.285px;color:#252423;font-style:italic;'>null</span>
<span class="t" style='left:464.60px;top:353.16px;font-size:14.7px;transform:scaleX(0.9000);color:#605e5c;'>6</span>
<span class="t" style='left:491.00px;top:354.14px;font-size:13.3px;transform:scaleX(0.9524);color:#252423;'>C002</span>
<span class="t" style='left:861.20px;top:354.14px;font-size:13.3px;transform:scaleX(0.9917);color:#252423;font-style:italic;'>499</span>
<span class="t" style='left:464.60px;top:379.46px;font-size:14.7px;transform:scaleX(0.9000);color:#605e5c;'>7</span>
<span class="t" style='left:491.00px;top:380.44px;font-size:13.3px;transform:scaleX(0.9524);color:#252423;'>C002</span>
<span class="t" style='left:861.20px;top:380.44px;font-size:13.3px;letter-spacing:0.285px;color:#252423;font-style:italic;'>null</span>
<span class="t" style='left:464.60px;top:405.96px;font-size:14.7px;transform:scaleX(0.9000);color:#605e5c;'>8</span>
<span class="t" style='left:491.00px;top:406.94px;font-size:13.3px;transform:scaleX(0.9524);color:#252423;'>C002</span>
<span class="t" style='left:861.20px;top:406.94px;font-size:13.3px;transform:scaleX(0.9917);color:#252423;font-style:italic;'>599</span>
<span class="t" style='left:464.60px;top:432.26px;font-size:14.7px;transform:scaleX(0.9000);color:#605e5c;'>9</span>
<span class="t" style='left:491.00px;top:433.24px;font-size:13.3px;transform:scaleX(0.9524);color:#252423;'>C002</span>
<span class="t" style='left:861.20px;top:433.24px;font-size:13.3px;letter-spacing:0.285px;color:#252423;font-style:italic;'>null</span>
<span class="t" style='left:489.30px;top:193.03px;font-size:10px;transform:scaleX(0.9857);color:#ffffff;'>A</span>
<span class="t" style='left:496.90px;top:189.13px;font-size:10px;letter-spacing:0.000px;color:#ffffff;'>B</span>
<span class="t" style='left:501.30px;top:196.94px;font-size:10px;transform:scaleX(0.9429);color:#ffffff;'>C</span>
<span class="t" style='left:691.20px;top:192.34px;font-size:12px;letter-spacing:0.000px;color:#555555;'>1</span>
<span class="t" style='left:696.50px;top:187.62px;font-size:12.5px;transform:scaleX(0.8714);color:#555555;'>2</span>
<span class="t" style='left:702.20px;top:195.02px;font-size:12.5px;transform:scaleX(0.8286);color:#555555;'>3</span>
<span class="t" style='left:1026.20px;top:76.73px;font-size:10px;letter-spacing:0.000px;color:#333333;'>1</span>
<span class="t" style='left:1039.00px;top:86.73px;font-size:10px;letter-spacing:0.000px;color:#333333;'>2</span>
<span class="t" style='left:603.7px;top:154px;font-family:"Liberation Mono",monospace;font-size:14.4px;letter-spacing:-0.347px;color:#1e1e1e'>= Table.TransformColumnTypes(Source,{{<span style="color:#a31515">"Ending Balance"</span>, Int64.Type}})</span>
</body></html>
